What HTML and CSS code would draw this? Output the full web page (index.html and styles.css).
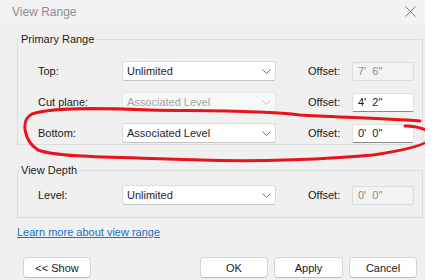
FILE: index.html
```html
<!DOCTYPE html>
<html lang="en">
<head>
    <meta charset="UTF-8">
    <title>View Range</title>
    <link rel="stylesheet" href="styles.css">
</head>
<body>
    <div class="dialog">
        <!-- Title bar -->
        <div class="titlebar">
            <span class="title">View Range</span>
            <svg class="close" width="11" height="11" viewBox="0 0 11 11">
                <path d="M0.5 0.5 L10.5 10.5 M10.5 0.5 L0.5 10.5" />
            </svg>
        </div>

        <!-- Primary range -->
        <fieldset class="group">
            <legend>Primary Range</legend>
            <div class="rows">
                <div class="row">
                    <span class="label">Top:</span>
                    <div class="combo">
                        <span>Unlimited</span>
                        <svg class="chev" width="9" height="5" viewBox="0 0 9 5"><path d="M0.5 0.5 L4.5 4.5 L8.5 0.5" /></svg>
                    </div>
                    <span class="offset-label">Offset:</span>
                    <div class="field disabled">7'  6"</div>
                </div>
                <div class="row">
                    <span class="label">Cut plane:</span>
                    <div class="combo disabled">
                        <span>Associated Level</span>
                        <svg class="chev" width="9" height="5" viewBox="0 0 9 5"><path d="M0.5 0.5 L4.5 4.5 L8.5 0.5" /></svg>
                    </div>
                    <span class="offset-label">Offset:</span>
                    <div class="field">4'  2"</div>
                </div>
                <div class="row">
                    <span class="label">Bottom:</span>
                    <div class="combo">
                        <span>Associated Level</span>
                        <svg class="chev" width="9" height="5" viewBox="0 0 9 5"><path d="M0.5 0.5 L4.5 4.5 L8.5 0.5" /></svg>
                    </div>
                    <span class="offset-label">Offset:</span>
                    <div class="field">0'  0"</div>
                </div>
            </div>
        </fieldset>

        <!-- View depth -->
        <fieldset class="group depth">
            <legend>View Depth</legend>
            <div class="rows">
                <div class="row">
                    <span class="label">Level:</span>
                    <div class="combo">
                        <span>Unlimited</span>
                        <svg class="chev" width="9" height="5" viewBox="0 0 9 5"><path d="M0.5 0.5 L4.5 4.5 L8.5 0.5" /></svg>
                    </div>
                    <span class="offset-label">Offset:</span>
                    <div class="field disabled">0'  0"</div>
                </div>
            </div>
        </fieldset>

        <a class="help" href="#">Learn more about view range</a>

        <div class="footer">
            <button class="btn">&lt;&lt; Show</button>
            <div class="actions">
                <button class="btn">OK</button>
                <button class="btn apply">Apply</button>
                <button class="btn">Cancel</button>
            </div>
        </div>

        <!-- hand-drawn markup over the dialog -->
        <svg class="markup" width="434" height="280" viewBox="0 0 434 280">
            <path d="M420 121 C380 118, 330 117, 300 115 C260 110, 200 111, 150 110 C100 108, 50 107, 32 114 C20 120, 24 141, 38 150 C60 158, 120 157, 200 160 C260 162, 330 159, 373 155 C400 151, 431 145, 431 137 C431 130, 418 126, 405 126" />
        </svg>
    </div>
</body>
</html>
```

FILE: styles.css
```css
/* Page */
body {
    margin: 0;
    background: #ffffff;
    font-family: 'Liberation Sans', Arial, sans-serif;
    font-size: 11px;
    color: #1b1b1b;
}
.dialog {
    position: relative;
    width: 425px;
    height: 280px;
    background: #f0f0f0;
    overflow: hidden;
}

/* Title bar */
.titlebar {
    display: flex;
    justify-content: space-between;
    align-items: flex-start;
    height: 24px;
    padding: 5px 9px 0 12px;
    box-sizing: border-box;
    background: #f2f2f2;
}
.title {
    font-size: 12px;
    line-height: 14px;
    color: #8e8e8e;
}
.close {
    margin-top: 1px;
}
.close path {
    stroke: #7a7a7a;
    stroke-width: 1;
    fill: none;
}

/* Group boxes */
.group {
    margin: 8px 0 0 17px;
    padding: 0;
    width: 406px;
    box-sizing: border-box;
    border: 1px solid #dcdcdc;
    min-width: 0;
}
.group legend {
    margin-left: 1px;
    padding: 0 2px;
    line-height: 14px;
    color: #1b1b1b;
}
.rows {
    display: flex;
    flex-direction: column;
    gap: 11px;
    padding: 15px 0 1px 20px;
}
.depth {
    margin-top: 18px;
}
.depth .rows {
    padding: 8px 0 12px 20px;
}
.row {
    display: flex;
    align-items: center;
    height: 20px;
}
.label {
    width: 84px;
}

/* Combo boxes */
.combo {
    display: flex;
    justify-content: space-between;
    align-items: center;
    width: 154px;
    height: 20px;
    padding: 0 4px 0 4px;
    box-sizing: border-box;
    background: #ffffff;
    border: 1px solid #dadada;
    border-bottom-color: #c4c4c4;
    border-radius: 3px;
    color: #1e1e30;
}
.chev path {
    stroke: #6e6e6e;
    stroke-width: 1;
    fill: none;
}
.combo.disabled {
    background: #f8f8f8;
    border-color: #e6e6e6;
    color: #a2a2a2;
}
.combo.disabled .chev path {
    stroke: #c0c0c0;
}

/* Offset fields */
.offset-label {
    width: 44px;
    margin-left: 32px;
}
.field {
    width: 62px;
    height: 19px;
    line-height: 17px;
    padding-left: 5px;
    box-sizing: border-box;
    background: #ffffff;
    border: 1px solid #e0e0e0;
    border-bottom-color: #8a8a8a;
    border-radius: 2px;
    white-space: pre;
}
.field.disabled {
    background: #f3f3f3;
    border-color: #dcdcdc;
    color: #8c8c8c;
}

/* Link */
.help {
    display: inline-block;
    margin: 7px 0 0 17px;
    line-height: 14px;
    color: #1a6fc9;
    text-decoration: underline;
}

/* Buttons */
.footer {
    display: flex;
    justify-content: space-between;
    margin-top: 18px;
    padding: 0 8px 0 23px;
}
.actions {
    display: flex;
    gap: 6px;
}
.btn {
    width: 68px;
    height: 21px;
    padding: 0;
    font-family: 'Liberation Sans', Arial, sans-serif;
    font-size: 11px;
    color: #1b1b1b;
    background: #fdfdfd;
    border: 1px solid #d4d4d4;
    border-bottom-color: #bcbcbc;
    border-radius: 4px;
}
.btn.apply {
    width: 69px;
}

/* Red markup stroke */
.markup {
    position: absolute;
    left: 0;
    top: 0;
    pointer-events: none;
}
.markup path {
    fill: none;
    stroke: #e8131b;
    stroke-width: 3;
    stroke-linecap: round;
    stroke-linejoin: round;
}
```
